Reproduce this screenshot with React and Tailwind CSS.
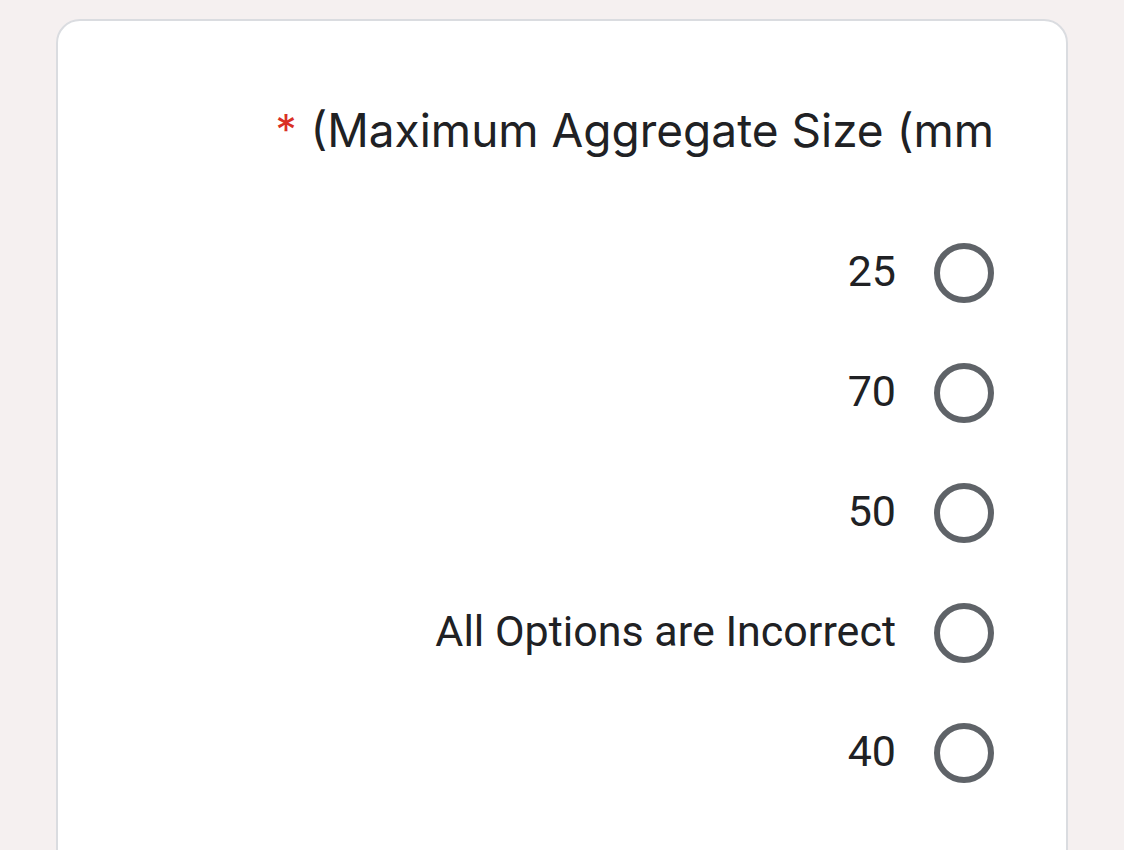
export default function App() {
  const options = ["25", "70", "50", "All Options are Incorrect", "40"];
  return (
    <div className="w-[1124px] h-[850px] overflow-hidden bg-[#f5f0f0] pt-[19px] pl-[56px]">
      <div className="w-[1012px] h-[900px] bg-white border-2 border-[#dadce0] rounded-[24px] pt-[79px] pr-[72px]">
        <div className="flex justify-end items-center h-[60px]" style={{ fontFamily: "Inter, 'Open Sans', sans-serif" }}>
          <span className="text-[#d93025] text-[42px] mr-[14px] leading-none">*</span>
          <span className="text-[#202124] text-[46px] leading-[60px]">(Maximum Aggregate Size (mm</span>
        </div>
        <div className="mt-[53px] flex flex-col">
          {options.map((o) => (
            <div key={o} className="h-[120px] flex items-center justify-end gap-[38px]">
              <span className="text-[#202124] text-[43px] leading-[50px] pb-[5px]" style={{ fontFamily: "Roboto, sans-serif" }}>{o}</span>
              <span className="w-[60px] h-[60px] rounded-full border-[6px] border-[#5f6368] box-border" />
            </div>
          ))}
        </div>
      </div>
    </div>
  );
}
